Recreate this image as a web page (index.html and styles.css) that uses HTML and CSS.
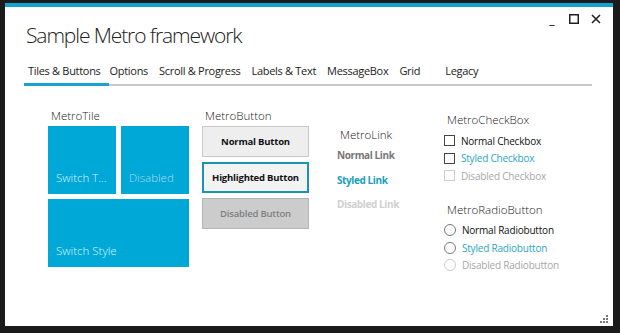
FILE: index.html
```html
<!DOCTYPE html>
<html lang="en">
<head>
    <meta charset="UTF-8">
    <title>Sample Metro framework</title>
    <link rel="stylesheet" href="styles.css">
</head>
<body>
    <div class="window">
        <div class="controls">
            <span class="ctl">_</span>
            <span class="ctl">
                <svg width="10" height="10" viewBox="0 0 10 10"><rect x="0.75" y="0.75" width="8.5" height="8.5" fill="none" stroke="#222" stroke-width="1.5"/></svg>
            </span>
            <span class="ctl">
                <svg width="10" height="10" viewBox="0 0 10 10"><path d="M1 1 L9 9 M9 1 L1 9" stroke="#222" stroke-width="1.6"/></svg>
            </span>
        </div>

        <h1 class="title">Sample Metro framework</h1>

        <!-- Вкладки -->
        <div class="tabs">
            <span class="tab active">Tiles &amp; Buttons</span>
            <span class="tab">Options</span>
            <span class="tab">Scroll &amp; Progress</span>
            <span class="tab">Labels &amp; Text</span>
            <span class="tab">MessageBox</span>
            <span class="tab">Grid</span>
            <span class="tab legacy">Legacy</span>
        </div>

        <div class="content">
            <!-- Плитки -->
            <div class="col tiles-col">
                <div class="group-label">MetroTile</div>
                <div class="tiles">
                    <div class="tile">Switch T...</div>
                    <div class="tile disabled">Disabled</div>
                    <div class="tile wide">Switch Style</div>
                </div>
            </div>

            <!-- Кнопки -->
            <div class="col buttons-col">
                <div class="group-label">MetroButton</div>
                <div class="btn">Normal Button</div>
                <div class="btn highlighted">Highlighted Button</div>
                <div class="btn disabled">Disabled Button</div>
            </div>

            <!-- Ссылки -->
            <div class="col links-col">
                <div class="group-label">MetroLink</div>
                <div class="link">Normal Link</div>
                <div class="link styled">Styled Link</div>
                <div class="link disabled">Disabled Link</div>
            </div>

            <!-- Чекбоксы и радиокнопки -->
            <div class="col checks-col">
                <div class="group-label">MetroCheckBox</div>
                <div class="check"><span class="box"></span>Normal Checkbox</div>
                <div class="check styled"><span class="box"></span>Styled Checkbox</div>
                <div class="check disabled"><span class="box"></span>Disabled Checkbox</div>

                <div class="group-label radio-label">MetroRadioButton</div>
                <div class="check radio"><span class="box round"></span>Normal Radiobutton</div>
                <div class="check radio styled"><span class="box round"></span>Styled Radiobutton</div>
                <div class="check radio disabled"><span class="box round"></span>Disabled Radiobutton</div>
            </div>
        </div>

        <div class="grip">
            <svg width="8" height="8" viewBox="0 0 8 8" fill="#777">
                <rect x="6" y="0" width="2" height="2"/>
                <rect x="3" y="3" width="2" height="2"/><rect x="6" y="3" width="2" height="2"/>
                <rect x="0" y="6" width="2" height="2"/><rect x="3" y="6" width="2" height="2"/><rect x="6" y="6" width="2" height="2"/>
            </svg>
        </div>
    </div>
</body>
</html>
```

FILE: styles.css
```css
/* Основные стили */
body {
    margin: 0;
    padding: 3px 0 0 5px;
    background-color: #1b1b1b;
    font-family: "Open Sans", "Noto Sans", sans-serif;
    color: #222;
    height: 330px;
    overflow: hidden;
}
.window {
    position: relative;
    width: 608px;
    height: 319px;
    background: #fff;
    border-top: 4px solid #11a3d2;
}
.controls {
    position: absolute;
    top: 5px;
    right: 12px;
    display: flex;
    align-items: center;
    gap: 12px;
}
.ctl {
    width: 10px;
    height: 14px;
    display: flex;
    align-items: center;
    justify-content: center;
    font-size: 13px;
    font-weight: bold;
    line-height: 10px;
}
.title {
    margin: 0;
    padding: 13px 0 0 21px;
    font-size: 21px;
    font-weight: 300;
    line-height: 30px;
    letter-spacing: -1.1px;
    color: #222;
}
.tabs {
    display: flex;
    gap: 11px;
    margin: 10px 0 0 19px;
    width: 568px;
    border-bottom: 2px solid #c8c8c8;
    font-size: 11px;
    letter-spacing: -0.3px;
}
.tab {
    padding: 3px 0 5px 0;
    margin-bottom: -2px;
    border-bottom: 3px solid transparent;
}
.tab:first-child {
    padding: 3px 8px 5px 4px;
    margin-right: -10px;
}
.tab.active {
    border-bottom-color: #1ba1cf;
}
.tab.legacy {
    margin-left: 14px;
}
.content {
    display: flex;
    padding: 22px 0 0 43px;
}
.group-label {
    font-size: 11.5px;
    font-weight: 300;
    color: #222;
    margin-left: 3px;
    height: 18px;
}
.tiles {
    display: grid;
    grid-template-columns: 68px 68px;
    gap: 5px;
}
.tile {
    height: 68px;
    background: #00a8d8;
    color: #dff4fb;
    font-size: 11.5px;
    font-weight: 300;
    display: flex;
    align-items: flex-end;
    padding: 0 0 9px 8px;
    box-sizing: border-box;
}
.tile.wide {
    grid-column: span 2;
}
.tile.disabled {
    color: #a9dcee;
}
.buttons-col {
    margin-left: 13px;
}
.btn {
    width: 107px;
    height: 31px;
    box-sizing: border-box;
    margin-bottom: 5px;
    background: #eeeeee;
    border: 1px solid #c9c9c9;
    display: flex;
    align-items: center;
    justify-content: center;
    font-size: 9.5px;
    font-weight: bold;
    letter-spacing: -0.2px;
    color: #111;
}
.btn.highlighted {
    border: 2px solid #1a95ad;
    background: #f3f3f3;
}
.btn.disabled {
    background: #cccccc;
    border-color: #b5b5b5;
    color: #808080;
    font-weight: 600;
}
.links-col {
    margin-left: 28px;
    padding-top: 19px;
}
.links-col .group-label {
    height: 21px;
}
.link {
    font-size: 10px;
    font-weight: bold;
    letter-spacing: -0.4px;
    color: #777;
    height: 24.5px;
}
.link.styled {
    color: #1aa0bf;
}
.link.disabled {
    color: #d0d0d0;
}
.checks-col {
    margin-left: 45px;
    padding-top: 4px;
}
.checks-col .group-label {
    height: 20px;
}
.check {
    display: flex;
    align-items: center;
    font-size: 10px;
    letter-spacing: -0.2px;
    height: 17.5px;
    color: #111;
}
.check.styled {
    color: #2aa6c4;
}
.check.disabled {
    color: #a8a8a8;
}
.box {
    width: 9px;
    height: 9px;
    border: 1px solid #444;
    margin: 0 6px 0 0;
}
.box.round {
    width: 10px;
    height: 10px;
    border-color: #777;
    border-radius: 50%;
}
.check.disabled .box {
    border-color: #ccc;
}
.radio-label {
    margin-top: 17px;
}
.grip {
    position: absolute;
    right: 5px;
    bottom: 3px;
    line-height: 0;
}
```
